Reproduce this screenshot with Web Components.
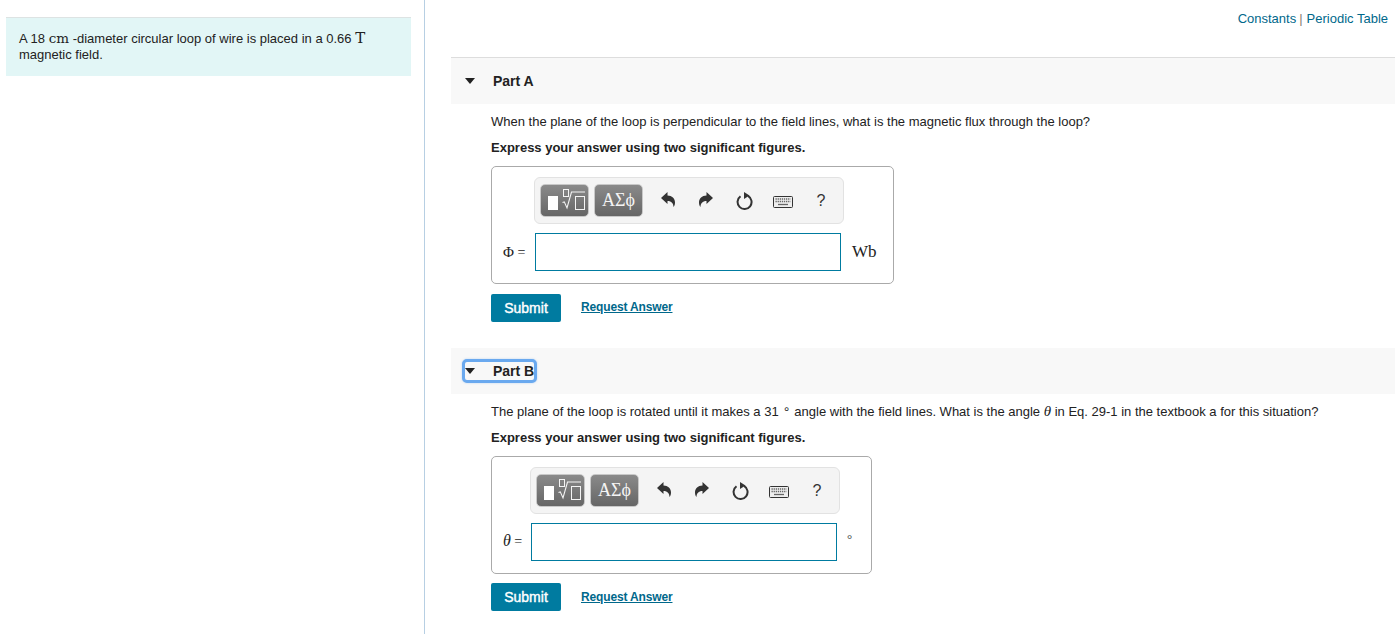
<!DOCTYPE html>
<html>
<head>
<meta charset="utf-8">
<title>Part A and Part B</title>
<style>
    html, body { margin: 0; height: 100%; overflow: hidden; }
    body { font-family: "Liberation Sans", Arial, sans-serif; font-size: 13px; color: #222; background: #fff; }
    .m { font-family: "DejaVu Serif", serif; font-size: 13.5px; line-height: 0; }
    .i { font-family: "Liberation Serif", serif; font-style: italic; font-size: 15px; line-height: 0; }
    .deg { font-family: "DejaVu Sans", sans-serif; font-size: 12px; line-height: 0; vertical-align: 3px; padding: 0 .5px; }
</style>
</head>
<body>

<mp-page>
    <mp-intro slot="side">A 18 <span class="m">cm</span> -diameter circular loop of wire is placed in a 0.66 <span class="m" style="font-size:15px">T</span> magnetic field.</mp-intro>

    <mp-links slot="links"></mp-links>

    <mp-part label="Part A" first>
        <span slot="question">When the plane of the loop is perpendicular to the field lines, what is the magnetic flux through the loop?</span>
        <mp-answer unit="Wb" width="403" pad="43" label-width="44">
            <span slot="symbol" style="font-family:'Liberation Serif',serif;font-size:15px">Φ</span>
        </mp-answer>
    </mp-part>

    <mp-part label="Part B" focused>
        <span slot="question">The plane of the loop is rotated until it makes a 31 <span class="deg">∘</span> angle with the field lines. What is the angle <span class="i">θ</span> in Eq. 29-1 in the textbook a for this situation?</span>
        <mp-answer unit="°" width="381" pad="39" label-width="40" small-unit>
            <span slot="symbol" class="i" style="font-size:16px">θ</span>
        </mp-answer>
    </mp-part>
</mp-page>

<script>
(function() {
    /*
     * Page shell: the left problem column and the right parts column
     */
    class MpPage extends HTMLElement {
        constructor() {
            super();
            this.attachShadow({mode: 'open'});
            this.shadowRoot.innerHTML = `
<style>
    :host { display: flex; height: 634px; box-sizing: border-box; }
    .side { flex: none; box-sizing: border-box; border-right: 1px solid #b7cfe3; width: 425px; padding: 17px 13px 0 6px; }
    .main { flex: 1; min-width: 0; padding-left: 26px; }
</style>
<div class="side"><slot name="side"></slot></div>
<div class="main"><slot name="links"></slot><slot></slot></div>
`;
        }
    }

    class MpIntro extends HTMLElement {
        constructor() {
            super();
            this.attachShadow({mode: 'open'});
            this.shadowRoot.innerHTML = `
<style>
    :host { display: block; box-sizing: border-box; height: 59px; padding: 13px 14px 0 13px; background: #e2f6f6; border-top: 1px solid #dde3e3; line-height: 16px; color: #222; }
</style>
<slot></slot>
`;
        }
    }

    class MpLinks extends HTMLElement {
        constructor() {
            super();
            this.attachShadow({mode: 'open'});
            this.shadowRoot.innerHTML = `
<style>
    :host { display: flex; justify-content: flex-end; height: 57px; box-sizing: border-box; padding: 11px 7px 0 0; line-height: 15px; color: #00688b; }
    i { font-style: normal; color: #8a7f70; padding: 0 4px 0 3px; }
</style>
<span>Constants</span><i>|</i><span>Periodic Table</span>
`;
        }
    }

    /*
     * One collapsible part: header bar, question, hint and whatever is slotted as answer
     */
    class MpPart extends HTMLElement {
        constructor() {
            super();
            const label = this.getAttribute('label');
            const focus = this.hasAttribute('focused');
            const first = this.hasAttribute('first');
            this.attachShadow({mode: 'open'});
            this.shadowRoot.innerHTML = `
<style>
    :host { display: block; }
    .bar { display: flex; align-items: center; box-sizing: border-box; height: 47px; background: #f8f8f8; padding-left: 14px; }
    :host([first]) .bar { border-top: 1px solid #ddd; }
    :host(:not([first])) { margin-top: 26px; }
    :host(:not([first])) .bar { height: 46px; }
    .toggle { display: flex; align-items: center; height: 20px; padding-right: 1px; font-size: 14px; font-weight: bold; color: #222; line-height: 20px; }
    .toggle.focus { outline: 3px solid #6aa9ef; outline-offset: -1px; border-radius: 3px; box-shadow: 0 0 2px 2px rgba(106, 169, 239, .5); margin-left: -1px; padding-left: 1px; }
    .tri { width: 0; height: 0; border-left: 5.5px solid transparent; border-right: 5.5px solid transparent; border-top: 6px solid #222; margin-right: 18px; }
    .body { padding: 10px 0 0 40px; }
    .q { line-height: 16px; height: 16px; white-space: nowrap; }
    .hint { font-weight: bold; line-height: 16px; margin-top: 10px; margin-bottom: 10px; }
</style>
<div class="bar"><div class="toggle ${focus ? 'focus' : ''}"><div class="tri"></div>${label}</div></div>
<div class="body">
    <div class="q"><slot name="question"></slot></div>
    <div class="hint">Express your answer using two significant figures.</div>
    <slot></slot>
    <mp-actions style="margin-top:${first ? 10 : 9}px;--link-top:${first ? -2 : 0}px"></mp-actions>
</div>
`;
        }
    }

    /*
     * The bordered answer box
     */
    class MpAnswer extends HTMLElement {
        constructor() {
            super();
            const width = this.getAttribute('width');
            const pad = this.getAttribute('pad');
            const labelWidth = this.getAttribute('label-width');
            const small = this.hasAttribute('small-unit');
            this.attachShadow({mode: 'open'});
            this.shadowRoot.innerHTML = `
<style>
    :host { display: block; box-sizing: border-box; width: ${width}px; height: 118px; border: 1px solid #aaa; border-radius: 5px; padding: 10px 0 0 ${pad - 1}px; }
    mp-toolbar { margin-bottom: 9px; }
    .row { display: flex; align-items: center; margin-left: -${labelWidth - 2}px; }
    .lab { width: ${labelWidth - 1}px; box-sizing: border-box; padding-left: 11px; font-family: "Liberation Serif", serif; font-size: 14px; color: #222; white-space: nowrap; }
    .field { width: 306px; height: 38px; box-sizing: border-box; border: 1px solid #007ba0; background: #fff; flex: none; }
    .unit { font-family: "Liberation Serif", serif; font-size: 17px; padding-left: 11px; color: #222; }
    .unit.small { font-size: 13px; padding-left: 10px; margin-top: -6px; color: #444; }
</style>
<mp-toolbar></mp-toolbar>
<div class="row">
    <div class="lab"><slot name="symbol"></slot> =</div>
    <div class="field"></div>
    <div class="unit ${small ? 'small' : ''}">${this.getAttribute('unit')}</div>
</div>
`;
        }
    }

    class MpToolbar extends HTMLElement {
        constructor() {
            super();
            this.attachShadow({mode: 'open'});
            this.shadowRoot.innerHTML = `
<style>
    :host { display: flex; align-items: center; box-sizing: border-box; width: 310px; height: 47px; background: #f4f4f4; border: 1px solid #e2e2e2; border-radius: 6px; padding-left: 5px; }
    .btn { display: flex; align-items: center; justify-content: center; box-sizing: border-box; width: 49px; height: 33px; border: 1px solid #c8c8c8; border-radius: 5px; background: linear-gradient(#8a8a8a, #666); flex: none; }
    .sym { margin-left: 5px; color: #f4f4f4; font-family: "Liberation Serif", serif; font-size: 18px; }
    .ic { display: flex; align-items: center; justify-content: center; width: 38.2px; height: 33px; flex: none; }
    .help { font-size: 16px; color: #333; }
    svg { display: block; }
</style>
<div class="btn">
    <svg width="47" height="31" viewBox="0 0 47 31">
        <rect x="7" y="11" width="10" height="14" fill="#fff"/>
        <rect x="22.5" y="4.5" width="5" height="7" fill="none" stroke="#f4f4f4"/>
        <path d="M21.500 17.500l1.800-.6 2.700 6.100 4.500-16H44" fill="none" stroke="#f4f4f4" stroke-width="1.100"/>
        <rect x="34.500" y="11.500" width="9" height="13" fill="none" stroke="#f4f4f4"/>
    </svg>
</div>
<div class="btn sym">ΑΣϕ</div>
<div class="ic" style="margin-left:6px">
    <svg width="14" height="15" viewBox="0 0 14 15" style="margin-top:-2px"><path d="M0 6L6.500 0v3.500c4.500 0 7.500 3 7.500 7 0 2-.7 3.500-1.500 4.500-.1-3.500-2-6-6-6V12z" fill="#333"/></svg>
</div>
<div class="ic">
    <svg width="14" height="15" viewBox="0 0 14 15" style="margin-top:-2px"><path d="M14 6L7.500 0v3.500C3 3.500 0 6.500 0 10.500c0 2 .7 3.500 1.500 4.500.1-3.500 2-6 6-6V12z" fill="#333"/></svg>
</div>
<div class="ic">
    <svg width="17" height="18" viewBox="0 0 17 18"><path d="M4.500 4.300a7 7 0 1 0 7.500-.4" fill="none" stroke="#333" stroke-width="2"/><path d="M8 0l5.500 3.500L8 7z" fill="#333"/></svg>
</div>
<div class="ic">
    <svg width="20" height="12" viewBox="0 0 20 12" style="margin-top:3px">
        <rect x=".5" y=".5" width="19" height="11" rx="1" fill="#eee" stroke="#333"/>
        <path d="M2.500 3h15M2.500 5.500h15" stroke="#666" stroke-width="1.300" stroke-dasharray="1.300 .8" fill="none"/>
        <path d="M5 8.500h10" stroke="#666" stroke-width="1.300" fill="none"/>
    </svg>
</div>
<div class="ic help">?</div>
`;
        }
    }

    class MpActions extends HTMLElement {
        constructor() {
            super();
            this.attachShadow({mode: 'open'});
            this.shadowRoot.innerHTML = `
<style>
    :host { display: flex; align-items: center; height: 28px; }
    .submit { display: flex; align-items: center; justify-content: center; width: 70px; height: 28px; background: #007ba0; border-radius: 2px; color: #fff; font-size: 14px; -webkit-text-stroke: .4px #fff; }
    a { margin-left: 20px; color: #00688b; font-size: 12px; font-weight: bold; letter-spacing: -.15px; text-decoration: underline; margin-top: var(--link-top); }
</style>
<div class="submit">Submit</div>
<a>Request Answer</a>
`;
        }
    }

    customElements.define('mp-page', MpPage);
    customElements.define('mp-intro', MpIntro);
    customElements.define('mp-links', MpLinks);
    customElements.define('mp-toolbar', MpToolbar);
    customElements.define('mp-answer', MpAnswer);
    customElements.define('mp-actions', MpActions);
    customElements.define('mp-part', MpPart);
})();
</script>
</body>
</html>
